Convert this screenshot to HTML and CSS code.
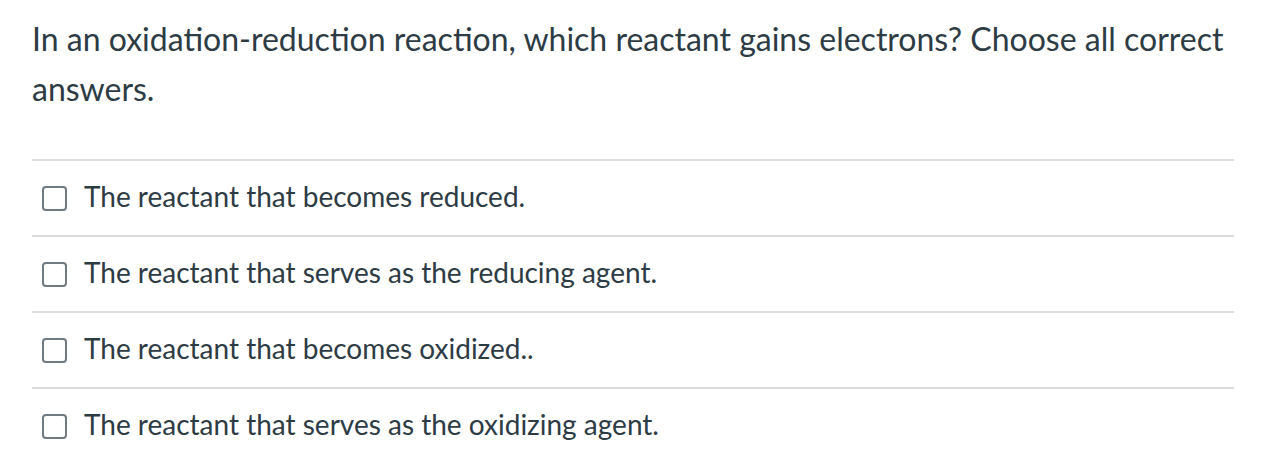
FILE: index.html
```html
<!DOCTYPE html>
<html>
<head>
<meta charset="utf-8">
<link rel="stylesheet" href="styles.css">
</head>
<body>
<div class="quiz">
  <p class="question">In an oxidation-reduction reaction, which reactant gains electrons? Choose all correct answers.</p>
  <ul class="answers">
    <li class="answer"><span class="box"></span><span class="label">The reactant that becomes reduced.</span></li>
    <li class="answer"><span class="box"></span><span class="label">The reactant that serves as the reducing agent.</span></li>
    <li class="answer"><span class="box"></span><span class="label">The reactant that becomes oxidized..</span></li>
    <li class="answer"><span class="box"></span><span class="label">The reactant that serves as the oxidizing agent.</span></li>
  </ul>
</div>
</body>
</html>
```

FILE: styles.css
```css
html, body {
  margin: 0;
  padding: 0;
  background: #ffffff;
}
body {
  font-family: Lato, "Liberation Sans", sans-serif;
  color: #2d3b45;
}
.quiz {
  padding: 14px 36px 0 32px;
}
.question {
  margin: 0;
  font-size: 32px;
  line-height: 50px;
  width: 1200px;
}
.answers {
  list-style: none;
  margin: 45px 0 0;
  padding: 0;
  width: 1202px;
}
.answer {
  display: flex;
  align-items: center;
  height: 74px;
  border-top: 2px solid #dddddd;
  padding-left: 10px;
}
.box {
  width: 21px;
  height: 21px;
  border: 2px solid #6f7a82;
  border-radius: 4px;
  flex: none;
}
.label {
  margin-left: 17px;
  padding-bottom: 5px;
  font-size: 28px;
}
```
